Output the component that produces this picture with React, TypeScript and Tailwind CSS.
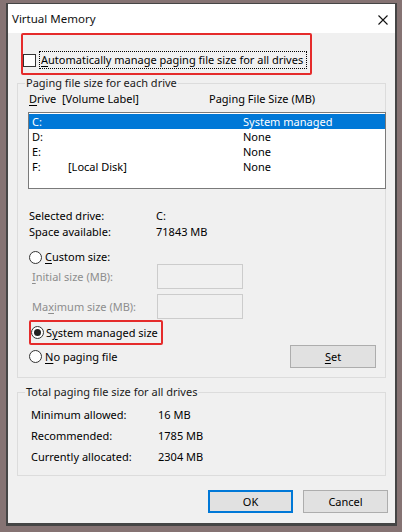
import React from 'react'

interface Drive {
  letter: string
  label: string
  size: string
  selected?: boolean
}

const drives: Drive[] = [
  { letter: 'C:', label: '', size: 'System managed', selected: true },
  { letter: 'D:', label: '', size: 'None' },
  { letter: 'E:', label: '', size: 'None' },
  { letter: 'F:', label: '[Local Disk]', size: 'None' },
]

const totals = [
  { name: 'Minimum allowed:', value: '16 MB' },
  { name: 'Recommended:', value: '1785 MB' },
  { name: 'Currently allocated:', value: '2304 MB' },
]

function Radio({ checked }: { checked?: boolean }) {
  return (
    <span className="flex h-[13px] w-[13px] shrink-0 items-center justify-center rounded-full border border-[#333] bg-white">
      {checked && <span className="h-[7px] w-[7px] rounded-full bg-[#222]" />}
    </span>
  )
}

function U({ children }: { children: React.ReactNode }) {
  return <span className="underline underline-offset-[2px] decoration-[1px]">{children}</span>
}

export default function App() {
  return (
    <div className="h-[532px] w-[402px] overflow-hidden whitespace-nowrap bg-[#857373] pt-[3px] pl-[6px] font-['Segoe_UI','Noto_Sans',sans-serif] text-[11px] leading-[16px] text-black">
      <div className="w-[391px] border-x-2 border-t border-b-[3px] border-[#454545]">
        {/* title bar */}
        <div className="flex h-[30px] items-center justify-between bg-white pl-[4px] pr-[7px]">
          <span className="text-[11.5px] text-[#111]">Virtual Memory</span>
          <svg width="10" height="10" viewBox="0 0 10 10" className="mt-[1px]">
            <path d="M0.5 0.5 L9.5 9.5 M9.5 0.5 L0.5 9.5" stroke="#111" strokeWidth="1.1" />
          </svg>
        </div>

        <div className="bg-[#f0f0f0] px-[9px] pb-[10px]">
          {/* auto manage checkbox */}
          <div className="-mt-px ml-[4px] w-[291px] rounded-[2px] border-2 border-[#e52b2b] pt-[16px] pb-[4px]">
            <div className="flex items-center">
              <span className="h-[13px] w-[13px] border border-[#333] bg-white" />
              <span className="ml-[3px] border border-dotted border-black pl-px pr-[3px]">
                <U>A</U>utomatically manage paging file size for all drives
              </span>
            </div>
          </div>

          {/* paging file size for each drive */}
          <div className="mt-[8px] w-[369px] border border-[#dcdcdc] pb-[9px]">
            <div className="-mt-[9px] ml-[7px] w-fit bg-[#f0f0f0] px-px text-[#1a1a1a]">
              Paging file size for each drive
            </div>
            <div className="flex pl-[11px]">
              <span className="w-[180px]">
                <U>D</U>rive&nbsp; [Volume Label]
              </span>
              <span>Paging File Size (MB)</span>
            </div>
            <div className="mt-[5px] ml-[10px] h-[77px] w-[358px] border border-[#7a7a7a] bg-white pt-px">
              {drives.map((d) => (
                <div
                  key={d.letter}
                  className={
                    'flex h-[15px] items-center pl-[3px] ' +
                    (d.selected ? 'bg-[#0078d7] text-white' : 'text-black')
                  }
                >
                  <span className="w-[36px]">{d.letter}</span>
                  <span className="w-[175px]">{d.label}</span>
                  <span>{d.size}</span>
                </div>
              ))}
            </div>

            <div className="mt-[19px] pl-[11px]">
              <div className="flex">
                <span className="w-[127px]">Selected drive:</span>
                <span>C:</span>
              </div>
              <div className="flex">
                <span className="w-[127px]">Space available:</span>
                <span>71843 MB</span>
              </div>
            </div>

            <div className="mt-[10px] flex h-[14px] items-center gap-[3px] pl-[11px]">
              <Radio />
              <span>
                <U>C</U>ustom size:
              </span>
            </div>
            <div className="flex h-[25px] items-center pl-[14px]">
              <span className="w-[125px] text-[#8d8d8d]">
                <U>I</U>nitial size (MB):
              </span>
              <span className="h-[25px] w-[86px] border border-[#cccccc] bg-[#f0f0f0]" />
            </div>
            <div className="mt-[5px] flex h-[25px] items-center pl-[14px]">
              <span className="w-[125px] text-[#8d8d8d]">
                Ma<U>x</U>imum size (MB):
              </span>
              <span className="h-[25px] w-[86px] border border-[#cccccc] bg-[#f0f0f0]" />
            </div>
            <div className="mt-px ml-[11px] flex h-[25px] w-[134px] items-center gap-[2px] rounded-[2px] border-2 border-[#e52b2b]">
              <Radio checked />
              <span>
                S<U>y</U>stem managed size
              </span>
            </div>
            <div className="flex h-[23px] items-center pl-[11px]">
              <div className="flex items-center gap-[3px]">
                <Radio />
                <span>
                  <U>N</U>o paging file
                </span>
              </div>
              <button className="ml-auto mr-[9px] h-[23px] w-[86px] border border-[#adadad] bg-[#e1e1e1]">
                <U>S</U>et
              </button>
            </div>
          </div>

          {/* totals */}
          <div className="mt-[14px] w-[369px] border border-[#dcdcdc] pb-[8px]">
            <div className="-mt-[9px] ml-[7px] w-fit bg-[#f0f0f0] px-px text-[#1a1a1a]">
              Total paging file size for all drives
            </div>
            <div className="mt-[4px] pl-[13px]">
              {totals.map((t) => (
                <div key={t.name} className="flex h-[21px] items-center">
                  <span className="w-[127px]">{t.name}</span>
                  <span>{t.value}</span>
                </div>
              ))}
            </div>
          </div>

          {/* buttons */}
          <div className="mt-[14px] flex justify-end gap-[10px]">
            <button className="h-[23px] w-[85px] border-2 border-[#0078d7] bg-[#e1e1e1]">OK</button>
            <button className="-mr-[2px] h-[23px] w-[85px] border border-[#adadad] bg-[#e1e1e1]">Cancel</button>
          </div>
        </div>
      </div>
    </div>
  )
}
